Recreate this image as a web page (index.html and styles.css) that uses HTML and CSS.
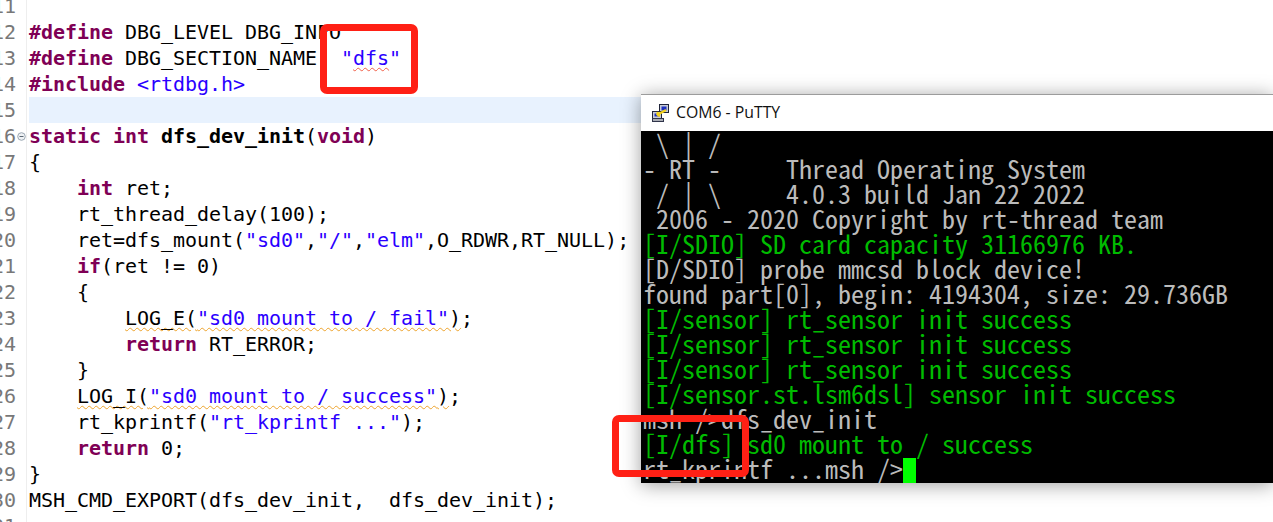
FILE: index.html
```html
<!DOCTYPE html>
<html lang="en">
<head>
<meta charset="utf-8">
<title>COM6 - PuTTY</title>
<link rel="stylesheet" href="styles.css">
</head>
<body>
<main class="editor">
<div class="row"><div class="num"><span>11</span></div><code class="code"></code></div>
<div class="row"><div class="num"><span>12</span></div><code class="code"><b>#define</b> DBG_LEVEL DBG_INFO</code></div>
<div class="row"><div class="num"><span>13</span></div><code class="code"><b>#define</b> DBG_SECTION_NAME  <i>"<u class="err">dfs</u>"</i></code></div>
<div class="row"><div class="num"><span>14</span></div><code class="code"><b>#include</b> <i>&lt;rtdbg.h&gt;</i></code></div>
<div class="row current"><div class="num"><span>15</span></div><code class="code"></code></div>
<div class="row"><div class="num"><span>16</span><svg class="fold" width="9" height="9" viewBox="0 0 9 9"><circle cx="4.5" cy="4.5" r="3.8" fill="#eef1f4" stroke="#9aa6b2"/><path d="M2.5 4.5h4" stroke="#5a6672"/></svg></div><code class="code"><b>static</b> <b>int</b> <strong>dfs_dev_init</strong>(<b>void</b>)</code></div>
<div class="row"><div class="num"><span>17</span></div><code class="code">{</code></div>
<div class="row"><div class="num"><span>18</span></div><code class="code">    <b>int</b> ret;</code></div>
<div class="row"><div class="num"><span>19</span></div><code class="code">    rt_thread_delay(100);</code></div>
<div class="row"><div class="num"><span>20</span></div><code class="code">    ret=dfs_mount(<i>"sd0"</i>,<i>"/"</i>,<i>"elm"</i>,O_RDWR,RT_NULL);</code></div>
<div class="row"><div class="num"><span>21</span></div><code class="code">    <b>if</b>(ret != 0)</code></div>
<div class="row"><div class="num"><span>22</span></div><code class="code">    {</code></div>
<div class="row"><div class="num"><span>23</span></div><code class="code">        <u class="warn">LOG_E(<i>"sd0 mount to / fail"</i>)</u>;</code></div>
<div class="row"><div class="num"><span>24</span></div><code class="code">        <b>return</b> RT_ERROR;</code></div>
<div class="row"><div class="num"><span>25</span></div><code class="code">    }</code></div>
<div class="row"><div class="num"><span>26</span></div><code class="code">    <u class="warn">LOG_I(<i>"sd0 mount to / success"</i>)</u>;</code></div>
<div class="row"><div class="num"><span>27</span></div><code class="code">    rt_kprintf(<i>"rt_kprintf ..."</i>);</code></div>
<div class="row"><div class="num"><span>28</span></div><code class="code">    <b>return</b> 0;</code></div>
<div class="row"><div class="num"><span>29</span></div><code class="code">}</code></div>
<div class="row"><div class="num"><span>30</span></div><code class="code">MSH_CMD_EXPORT(dfs_dev_init,  dfs_dev_init);</code></div>
<div class="row"><div class="num"><span>31</span></div><code class="code"></code></div>
</main>

<section class="putty">
<header class="titlebar">
<svg class="appicon" width="20" height="20" viewBox="0 0 20 20">
<rect x="8.5" y="1.5" width="9" height="8" fill="#c9ccd6" stroke="#20243a"/>
<rect x="10.5" y="3.5" width="5" height="4" fill="#1c2fc0"/>
<rect x="1.5" y="8.5" width="9" height="7" fill="#c9ccd6" stroke="#20243a"/>
<rect x="3.5" y="10.5" width="5" height="3" fill="#1c2fc0"/>
<rect x="1.5" y="15.5" width="11" height="3" fill="#a9acb4" stroke="#30344a"/>
<path d="M15 7 6 12M6 12l1-3M6 12l3 1" stroke="#f2d21e" stroke-width="2.2" fill="none"/>
</svg>
<h1 class="title">COM6 - PuTTY</h1>
</header>
<div class="term">
<div class="tl"> \ | /</div>
<div class="tl">- RT -     Thread Operating System</div>
<div class="tl"> / | \     4.0.3 build Jan 22 2022</div>
<div class="tl"> 2006 - 2020 Copyright by rt-thread team</div>
<div class="tl ok">[I/SDIO] SD card capacity 31166976 KB.</div>
<div class="tl">[D/SDIO] probe mmcsd block device!</div>
<div class="tl">found part[0], begin: 4194304, size: 29.736GB</div>
<div class="tl ok">[I/sensor] rt_sensor init success</div>
<div class="tl ok">[I/sensor] rt_sensor init success</div>
<div class="tl ok">[I/sensor] rt_sensor init success</div>
<div class="tl ok">[I/sensor.st.lsm6dsl] sensor init success</div>
<div class="tl">msh />dfs_dev_init</div>
<div class="tl ok">[I/dfs] sd0 mount to / success</div>
<div class="tl">rt_kprintf ...msh /><span class="cursor"></span></div>
</div>
</section>

<div class="mark mark-a"></div>
<div class="mark mark-b"></div>
</body>
</html>
```
FILE: styles.css
```css
html, body {
  margin: 0;
  height: 522px;
  overflow: hidden;
  background: #fff;
}
.editor {
  margin-top: -7px;
  font: 20px/26px "DejaVu Sans Mono", monospace;
  letter-spacing: -.04px;
  color: #000;
}
.row {
  display: flex;
  height: 26px;
}
.num {
  width: 26px;
  flex: none;
  display: flex;
  align-items: center;
  border-right: 1px solid #eeeeee;
  margin-right: 2px;
  box-sizing: content-box;
  overflow: hidden;
  position: relative;
  color: #787878;
}
.num span {
  flex: none;
  margin-left: -8px;
}
.fold {
  flex: none;
  margin-left: 1px;
}
.code {
  flex: 1;
  font: inherit;
  white-space: pre;
}
.current .code {
  background: #e8f2fe;
}
.code b {
  color: #7f0055;
  font-weight: 700;
}
.code strong {
  font-weight: 700;
}
.code i {
  color: #2a00ff;
  font-style: normal;
}
.code u {
  text-decoration: underline wavy 1px;
  text-underline-offset: 2px;
}
.err {
  text-decoration-color: #f0604a !important;
}
.warn {
  text-decoration-color: #eda32c !important;
}
.putty {
  position: absolute;
  left: 641px;
  top: 94px;
  width: 632px;
  height: 389px;
  display: flex;
  flex-direction: column;
  box-shadow: 0 2px 18px rgba(0, 0, 0, .38);
  background: #fff;
  border-top: 1px solid #9c9c9c;
  box-sizing: border-box;
}
.titlebar {
  height: 36px;
  flex: none;
  display: flex;
  align-items: center;
  padding-left: 10px;
  box-sizing: border-box;
  gap: 5px;
}
.title {
  margin: 0;
  font: 400 15.8px/1 "Open Sans", "Noto Sans", sans-serif;
  color: #111;
}
.term {
  flex: 1;
  background: #000;
  color: #bbb;
  padding: 2px 0 0 2px;
  font-family: "Noto Sans CJK JP", monospace;
  font-size: 26px;
  font-weight: 400;
  font-feature-settings: "hwid";
  overflow: hidden;
}
.tl {
  height: 25px;
  line-height: 19px;
  white-space: pre;
}
.ok {
  color: #00bb00;
}
.cursor {
  display: inline-block;
  width: 13px;
  height: 25px;
  background: #00ff00;
  vertical-align: top;
}
.mark {
  position: absolute;
  border: 7px solid #ff2015;
  border-radius: 7px;
  box-sizing: border-box;
}
.mark-a {
  left: 320px;
  top: 24px;
  width: 98px;
  height: 70px;
}
.mark-b {
  left: 612px;
  top: 415px;
  width: 137px;
  height: 62px;
}
```
